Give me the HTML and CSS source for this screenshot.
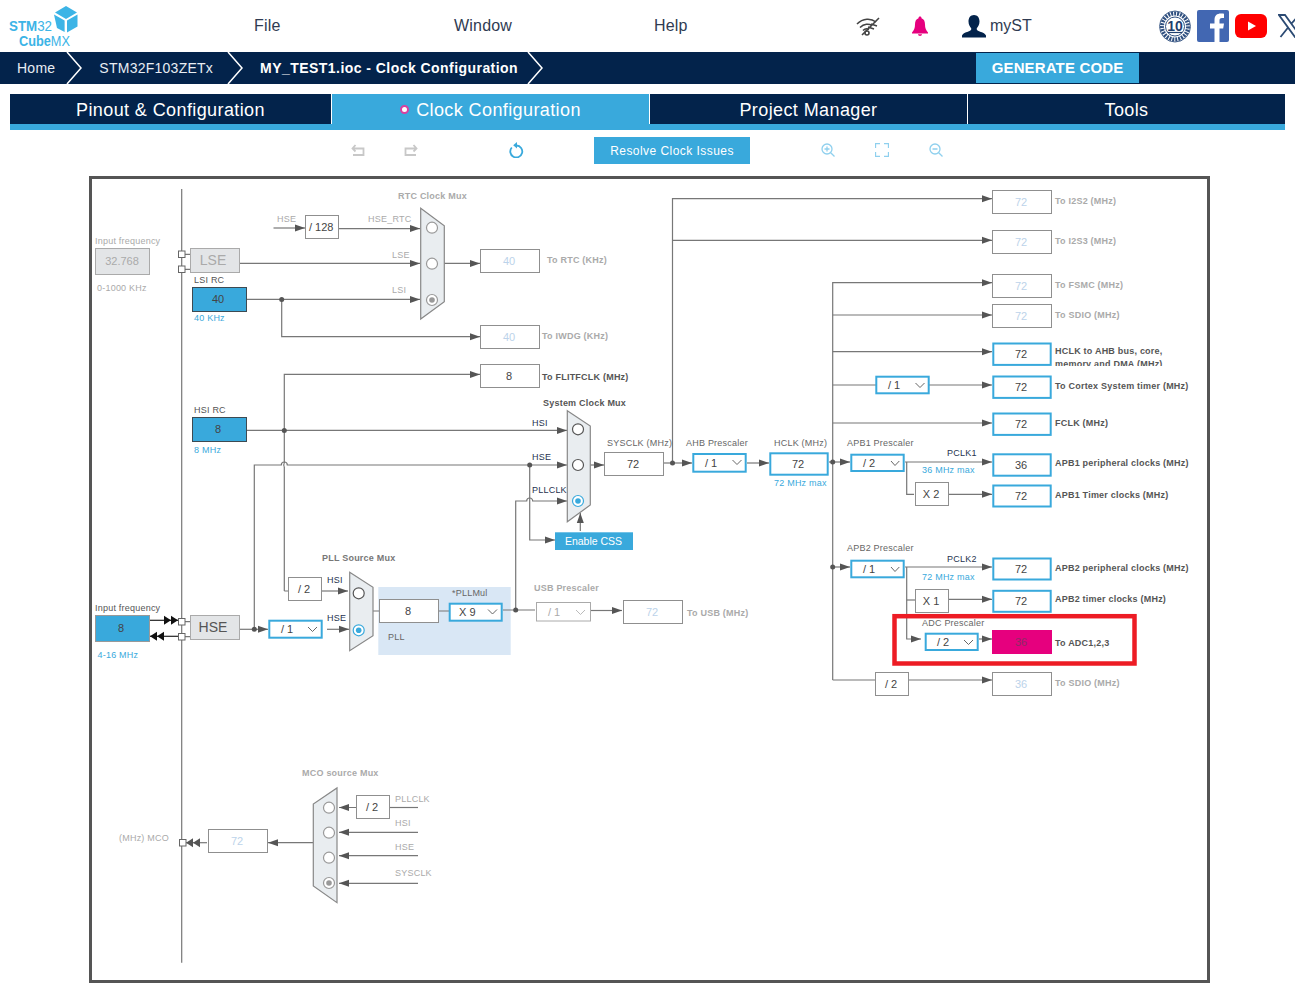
FILE: index.html
```html
<!DOCTYPE html>
<html lang="en">
<head>
<meta charset="utf-8">
<title>STM32CubeMX - Clock Configuration</title>
<link rel="stylesheet" href="styles.css">
</head>
<body>
<header class="top">
  <div class="logo">
    <svg width="80" height="50" viewBox="0 0 80 50">
      <polygon class="lg" points="66,6 77,12.5 66,19 55,12.5"/>
      <polygon class="lg" points="54,14.5 64.6,20.5 64.6,32 57,28"/>
      <polygon class="lg" points="67,20.5 77.5,14.5 77.5,26.5 67,32.5"/>
      <text class="lgt" transform="translate(9 31) scale(.89 1)"><tspan class="lgb">STM</tspan>32</text>
      <text class="lgt" transform="translate(19 45.500) scale(.85 1)"><tspan class="lgb">Cube</tspan>MX</text>
    </svg>
  </div>
  <nav class="menu">
    <span class="menu-item">File</span>
    <span class="menu-item">Window</span>
    <span class="menu-item">Help</span>
  </nav>
  <svg class="ic-wifi" width="24" height="20" viewBox="0 0 24 20">
    <path class="wf" d="M1 8C7 2 15 2 20 6M4 11.500C8 7.500 13 7.500 16 9.500M7 14.500C9 12.500 11.500 12.500 13 13.500"/>
    <path class="wf" d="M6 19L23 2M15 8L21 10M12 11L18 13"/>
    <circle class="wf" cx="11" cy="17" r="2"/>
  </svg>
  <svg class="ic-bell" width="16" height="20" viewBox="0 0 16 20">
    <path class="bell" d="M8 0.500C9 0.500 9.500 1 9.500 2.200C12.200 3 13 5.500 13 8.500C13 12 14 14 16 16.500V17.500H0V16.500C2 14 3 12 3 8.500C3 5.500 3.800 3 6.500 2.200C6.500 1 7 0.500 8 0.500ZM6 18.300H10C10 19.300 9 20 8 20S6 19.300 6 18.300Z"/>
  </svg>
  <svg class="ic-user" width="24" height="23" viewBox="0 0 24 23">
    <path class="usr" d="M12 0C15.500 0 17.500 2.800 17.500 6.500C17.500 9.500 16 12 14.800 13.200C14.500 14.500 15 15.300 16.500 16C19.500 17.300 23 18 24 20.500V22.500H0V20.500C1 18 4.500 17.300 7.500 16C9 15.300 9.500 14.500 9.200 13.200C8 12 6.500 9.500 6.500 6.500C6.500 2.800 8.500 0 12 0Z"/>
  </svg>
  <span class="myst">myST</span>
  <svg class="ic-badge" width="32" height="33" viewBox="0 0 32 33">
    <circle class="bd0" cx="16" cy="16.500" r="15.500"/>
    <circle class="bd1" cx="16" cy="16.500" r="13"/>
    <circle class="bd2" cx="16" cy="16.500" r="9.500"/>
    <text class="bdt" x="16" y="20.500" text-anchor="middle">10</text>
    <path class="bd3" d="M9 22.500H23"/>
  </svg>
  <svg class="ic-fb" width="32" height="32" viewBox="0 0 32 32">
    <rect class="fb" width="32" height="32" rx="2"/>
    <path class="wh" d="M17.500 32V18.500H13V13.500H17.500V10C17.500 5.500 20 3.500 24 3.500C25.500 3.500 27 3.700 27 3.700V8H25C23 8 22.500 9 22.500 10.500V13.500H27L26.200 18.500H22.500V32Z"/>
  </svg>
  <svg class="ic-yt" width="32" height="24" viewBox="0 0 32 24">
    <rect class="yt" width="32" height="24" rx="6"/>
    <polygon class="wh" points="13,7.500 21,12 13,16.500"/>
  </svg>
  <svg class="ic-x" width="24" height="24" viewBox="0 0 24 24">
    <path class="xl" d="M1 1H7L23 23H17ZM21 1L13.500 9.500M10.500 13L2.500 23"/>
  </svg>
</header>

<div class="crumbs">
  <span class="crumb">Home</span>
  <svg class="chev first" width="16" height="32" viewBox="0 0 16 32"><path class="chv" d="M1 0L15 16L1 32"/></svg>
  <span class="crumb">STM32F103ZETx</span>
  <svg class="chev second" width="16" height="32" viewBox="0 0 16 32"><path class="chv" d="M1 0L15 16L1 32"/></svg>
  <span class="crumb strong">MY_TEST1.ioc - Clock Configuration</span>
  <svg class="chev third" width="16" height="32" viewBox="0 0 16 32"><path class="chv" d="M1 0L15 16L1 32"/></svg>
  <button class="generate">GENERATE CODE</button>
</div>

<div class="tabs">
  <div class="tab">Pinout &amp; Configuration</div>
  <div class="tab active"><span class="dot"></span>Clock Configuration</div>
  <div class="tab">Project Manager</div>
  <div class="tab">Tools</div>
</div>

<div class="toolbar">
  <svg class="t-undo" width="14" height="14" viewBox="0 0 14 14"><path class="tg" d="M1.500 5.500H12.500V12H2M4.500 2L1.500 5.500L4.500 8.500"/></svg>
  <svg class="t-redo" width="14" height="14" viewBox="0 0 14 14"><path class="tg" d="M12.500 5.500H1.500V12H12M9.500 2L12.500 5.500L9.500 8.500"/></svg>
  <svg class="t-refresh" width="15" height="16" viewBox="0 0 15 16"><path class="tb" d="M2.800 5.500A6 6 0 1 0 7.500 3.500"/><polygon class="tbf" points="8,0 8,6.500 4.200,3.300"/></svg>
  <button class="resolve">Resolve Clock Issues</button>
  <svg class="t-zin" width="14" height="14" viewBox="0 0 14 14"><circle class="tl" cx="6" cy="6" r="5"/><path class="tl" d="M9.700 9.700L13.500 13.500M3.500 6H8.500M6 3.500V8.500"/></svg>
  <svg class="t-full" width="14" height="14" viewBox="0 0 14 14"><path class="tl" d="M.5 5V.5H5M9 .5H13.500V5M13.500 9V13.500H9M5 13.500H.5V9"/></svg>
  <svg class="t-zout" width="14" height="14" viewBox="0 0 14 14"><circle class="tl" cx="6" cy="6" r="5"/><path class="tl" d="M9.700 9.700L13.500 13.500M3.500 6H8.500"/></svg>
</div>

<main class="diagram">
<svg class="clock" width="1115" height="801" viewBox="92 179 1115 801">
  <defs>
    <marker id="a" markerUnits="userSpaceOnUse" markerWidth="10" markerHeight="8" refX="10" refY="4" orient="auto"><path class="head" d="M0 .5L10 4L0 7.500Z"/></marker>
    <marker id="k" markerUnits="userSpaceOnUse" markerWidth="14" markerHeight="10" refX="14" refY="5" orient="auto"><path class="headk" d="M0 .5L7 5L0 9.500ZM7 .5L14 5L7 9.500Z"/></marker>
    <marker id="g" markerUnits="userSpaceOnUse" markerWidth="14" markerHeight="10" refX="14" refY="5" orient="auto"><path class="head" d="M0 .5L7 5L0 9.500ZM7 .5L14 5L7 9.500Z"/></marker>
    <clipPath id="clipAhb"><rect x="1054" y="340" width="130" height="26"/></clipPath>
  </defs>

  <!-- bus -->
  <path class="w" d="M181.700 189V962.700"/>
  <rect class="pll" x="378.300" y="587" width="132.400" height="68"/>

  <!-- wires -->
  <path class="w" d="M273.500 228H305" marker-end="url(#a)"/>
  <path class="w" d="M338 228.600H420" marker-end="url(#a)"/>
  <path class="w" d="M240 263.400H420" marker-end="url(#a)"/>
  <path class="w" d="M247 299.400H420" marker-end="url(#a)"/>
  <path class="w" d="M444 263.400H480" marker-end="url(#a)"/>
  <path class="w" d="M281.700 299.400V336.700H480" marker-end="url(#a)"/>
  <path class="w" d="M284.300 591H288M284.300 591V467M284.300 463V374.400H480" marker-end="url(#a)"/>
  <path class="w" d="M284.300 467A2 3 0 0 1 284.300 463" />
  <path class="w" d="M247 430.400H567" marker-end="url(#a)"/>
  <path class="w" d="M254.300 629.300V465H281.300A3 3 0 0 1 287.300 465H567" marker-end="url(#a)"/>
  <path class="w" d="M529.700 465V540H555" marker-end="url(#a)"/>
  <path class="w" d="M515.700 610V501H526.700A3 3 0 0 1 532.700 501H567" marker-end="url(#a)"/>
  <path class="w" d="M580.300 531V513" marker-end="url(#a)"/>
  <path class="w" d="M590 465H604" marker-end="url(#a)"/>
  <path class="w" d="M664 463H692" marker-end="url(#a)"/>
  <path class="w" d="M672.500 463V198.700H992" marker-end="url(#a)"/>
  <path class="w" d="M672.500 240.300H992" marker-end="url(#a)"/>
  <path class="w" d="M747 463H769" marker-end="url(#a)"/>
  <path class="w" d="M829 462H850" marker-end="url(#a)"/>
  <path class="w" d="M832.700 567H850" marker-end="url(#a)"/>
  <path class="w" d="M832.700 680V282.700H992" marker-end="url(#a)"/>
  <path class="w" d="M832.700 315H992" marker-end="url(#a)"/>
  <path class="w" d="M832.700 351.700H992" marker-end="url(#a)"/>
  <path class="w" d="M832.700 385H992" marker-end="url(#a)"/>
  <path class="w" d="M832.700 423H992" marker-end="url(#a)"/>
  <path class="w" d="M905 462H992" marker-end="url(#a)"/>
  <path class="w" d="M906.700 462V494.300H914"/>
  <path class="w" d="M949 494.300H992" marker-end="url(#a)"/>
  <path class="w" d="M905 567H992" marker-end="url(#a)"/>
  <path class="w" d="M906.700 567V639H921" marker-end="url(#a)"/>
  <path class="w" d="M906.700 600H915"/>
  <path class="w" d="M949 599.300H992" marker-end="url(#a)"/>
  <path class="w" d="M979 639H992" marker-end="url(#a)"/>
  <path class="w" d="M832.700 680H875"/>
  <path class="w" d="M909 680H992" marker-end="url(#a)"/>
  <path class="w" d="M240 629.300H268" marker-end="url(#a)"/>
  <path class="w" d="M327 629.300H349" marker-end="url(#a)"/>
  <path class="w" d="M322 591H348" marker-end="url(#a)"/>
  <path class="w" d="M373 611H380M438 611H449M503 610H535"/>
  <path class="w" d="M591 610.500H622" marker-end="url(#a)"/>
  <path class="w" d="M390 807.500H339" marker-end="url(#a)"/>
  <path class="w" d="M418 807.500H390"/>
  <path class="w" d="M418 832.300H339" marker-end="url(#a)"/>
  <path class="w" d="M418 855.700H339" marker-end="url(#a)"/>
  <path class="w" d="M418 883.300H339" marker-end="url(#a)"/>
  <path class="w" d="M313 842.700H268" marker-end="url(#a)"/>
  <path class="w" d="M207 842.700H186" marker-end="url(#g)"/>
  <path class="b" d="M150 620.300H178" marker-end="url(#k)"/>
  <path class="b" d="M178 636.300H150" marker-end="url(#k)"/>
  <path class="w" d="M181.700 254.300H190M181.700 269.300H190M181.700 621.700H190M181.700 636.700H190"/>

  <!-- dots -->
  <circle class="node" cx="281.700" cy="299.400" r="2.500"/>
  <circle class="node" cx="284.300" cy="430.400" r="2.500"/>
  <circle class="node" cx="529.700" cy="465" r="2.500"/>
  <circle class="node" cx="254.300" cy="629.300" r="2.500"/>
  <circle class="node" cx="515.700" cy="610" r="2.500"/>
  <circle class="node" cx="672.500" cy="463" r="2.500"/>
  <circle class="node" cx="832.700" cy="462" r="2.500"/>
  <circle class="node" cx="832.700" cy="567" r="2.500"/>

  <!-- pads -->
  <rect class="pad" x="178.500" y="251" width="6.500" height="6.500"/>
  <rect class="pad" x="178.500" y="266" width="6.500" height="6.500"/>
  <rect class="pad" x="178.500" y="618.500" width="6.500" height="6.500"/>
  <rect class="pad" x="178.500" y="633.500" width="6.500" height="6.500"/>
  <rect class="pad" x="179.500" y="839.500" width="6.500" height="6.500"/>

  <!-- muxes -->
  <polygon class="mux" points="420.700,208.300 444.300,225.700 444.300,301.700 420.700,319"/>
  <circle class="off" cx="432" cy="227.700" r="5.500"/>
  <circle class="off" cx="432" cy="263.700" r="5.500"/>
  <circle class="off" cx="432" cy="300" r="5.500"/><circle class="offdot" cx="432" cy="300" r="2.800"/>

  <polygon class="mux" points="567.300,410.700 590.300,426 590.300,505 567.300,521.700"/>
  <circle class="on" cx="578" cy="429.300" r="5.500"/>
  <circle class="on" cx="578" cy="465" r="5.500"/>
  <circle class="sel" cx="578" cy="501" r="5.500"/><circle class="seldot" cx="578" cy="501" r="2.800"/>

  <polygon class="mux" points="349.700,572.300 373,587.300 373,635.700 349.700,650.700"/>
  <circle class="on" cx="358.700" cy="593.300" r="5.500"/>
  <circle class="sel" cx="358.700" cy="630.300" r="5.500"/><circle class="seldot" cx="358.700" cy="630.300" r="2.800"/>

  <polygon class="mux" points="337,788 337,902.700 313.300,886 313.300,804"/>
  <circle class="off" cx="329" cy="807.700" r="5.500"/>
  <circle class="off" cx="329" cy="832.700" r="5.500"/>
  <circle class="off" cx="329" cy="857.700" r="5.500"/>
  <circle class="off" cx="329" cy="883" r="5.500"/><circle class="offdot" cx="329" cy="883" r="2.800"/>

  <!-- source boxes -->
  <rect class="grey" x="95.500" y="248.500" width="54" height="26"/>
  <text class="n mid off-t" x="122" y="265">32.768</text>
  <rect class="grey" x="190.500" y="248.500" width="49" height="24"/>
  <text class="src mid off-t" x="213" y="265">LSE</text>
  <rect class="act" x="192.500" y="287.500" width="54" height="24"/>
  <text class="n mid" x="218" y="303">40</text>
  <rect class="act" x="192.500" y="417.500" width="54" height="24"/>
  <text class="n mid" x="218" y="433">8</text>
  <rect class="act2" x="95.500" y="615.500" width="54" height="26"/>
  <text class="n mid" x="121" y="632">8</text>
  <rect class="grey dark" x="190.500" y="615.500" width="49" height="24"/>
  <text class="src mid" x="213" y="632">HSE</text>

  <!-- plain boxes -->
  <rect class="box" x="305.500" y="215.500" width="33" height="23"/>
  <text class="n" x="309" y="231">/ 128</text>
  <rect class="box" x="288.500" y="577.500" width="33" height="23"/>
  <text class="n mid" x="304" y="593">/ 2</text>
  <rect class="box" x="379.500" y="599.500" width="59" height="23"/>
  <text class="n mid" x="408" y="615">8</text>
  <rect class="box" x="915.500" y="482.500" width="33" height="23"/>
  <text class="n mid" x="931" y="498">X 2</text>
  <rect class="box" x="915.500" y="589.500" width="33" height="23"/>
  <text class="n mid" x="931" y="605">X 1</text>
  <rect class="box" x="875.500" y="672.500" width="33" height="23"/>
  <text class="n mid" x="891" y="688">/ 2</text>
  <rect class="box" x="356.500" y="795.500" width="33" height="23"/>
  <text class="n mid" x="372" y="811">/ 2</text>

  <!-- selects -->
  <rect class="selbox" x="269.300" y="620.700" width="52.400" height="17"/>
  <text class="n" x="281" y="633">/ 1</text><path class="cv" d="M308 627L312.500 631.500L317 627"/>
  <rect class="selbox" x="449.700" y="603.700" width="52" height="17"/>
  <text class="n" x="459" y="616">X 9</text><path class="cv" d="M488 609.500L492.500 614L497 609.500"/>
  <rect class="selbox" x="693.300" y="454" width="52.400" height="17.700"/>
  <text class="n" x="705" y="467">/ 1</text><path class="cv" d="M732.500 460L737 464.500L741.500 460"/>
  <rect class="selbox" x="876.300" y="376.700" width="52.400" height="16.600"/>
  <text class="n" x="888" y="389">/ 1</text><path class="cv" d="M915.500 383L920 387.500L924.500 383"/>
  <rect class="selbox" x="851.300" y="454.700" width="52.400" height="16.300"/>
  <text class="n" x="863" y="467">/ 2</text><path class="cv" d="M891 461L895 465.500L899.300 461"/>
  <rect class="selbox" x="851.300" y="560.700" width="52.400" height="16.600"/>
  <text class="n" x="863" y="573">/ 1</text><path class="cv" d="M891 567L895 571.500L899.300 567"/>
  <rect class="selbox" x="925.700" y="633.700" width="52" height="16.300"/>
  <text class="n" x="937" y="646">/ 2</text><path class="cv" d="M964 640L968.500 644.500L973 640"/>
  <rect class="selgrey" x="536.500" y="602.500" width="54" height="18.500"/>
  <text class="n off-t" x="548" y="616">/ 1</text><path class="cvg" d="M576 610L580.500 614.500L585 610"/>

  <!-- outputs -->
  <rect class="box" x="480.500" y="249.500" width="59" height="23"/><text class="n mid pale" x="509" y="265">40</text>
  <rect class="box" x="480.500" y="325.500" width="59" height="23"/><text class="n mid pale" x="509" y="341">40</text>
  <rect class="box" x="480.500" y="364.500" width="59" height="23"/><text class="n mid" x="509" y="380">8</text>
  <rect class="box" x="604.500" y="452.500" width="59" height="23"/><text class="n mid" x="633" y="468">72</text>
  <rect class="bb" x="770.300" y="453.300" width="57.400" height="21.400"/><text class="n mid" x="798" y="468">72</text>
  <rect class="box" x="623.500" y="600.500" width="59" height="23"/><text class="n mid pale" x="652" y="616">72</text>
  <rect class="box" x="208.500" y="829.500" width="59" height="23"/><text class="n mid pale" x="237" y="845">72</text>

  <rect class="box" x="992.500" y="190.500" width="59" height="23"/><text class="n mid pale" x="1021" y="206">72</text>
  <rect class="box" x="992.500" y="230.500" width="59" height="23"/><text class="n mid pale" x="1021" y="246">72</text>
  <rect class="box" x="992.500" y="274.500" width="59" height="23"/><text class="n mid pale" x="1021" y="290">72</text>
  <rect class="box" x="992.500" y="304.500" width="59" height="23"/><text class="n mid pale" x="1021" y="320">72</text>
  <rect class="bb" x="993.300" y="343.500" width="57.400" height="21.400"/><text class="n mid" x="1021" y="358">72</text>
  <rect class="bb" x="993.300" y="376.500" width="57.400" height="21.400"/><text class="n mid" x="1021" y="391">72</text>
  <rect class="bb" x="993.300" y="413.500" width="57.400" height="21.400"/><text class="n mid" x="1021" y="428">72</text>
  <rect class="bb" x="993.300" y="454.300" width="57.400" height="21.400"/><text class="n mid" x="1021" y="469">36</text>
  <rect class="bb" x="993.300" y="485.500" width="57.400" height="21"/><text class="n mid" x="1021" y="500">72</text>
  <rect class="bb" x="993.300" y="558.500" width="57.400" height="21"/><text class="n mid" x="1021" y="573">72</text>
  <rect class="bb" x="993.300" y="590.800" width="57.400" height="21"/><text class="n mid" x="1021" y="605">72</text>
  <rect class="pink" x="992" y="630" width="60" height="24"/><text class="n mid pinkt" x="1021" y="646">36</text>
  <rect class="box" x="992.500" y="672.500" width="59" height="23"/><text class="n mid pale" x="1021" y="688">36</text>

  <rect class="enable" x="555" y="532.300" width="78" height="17.700"/>
  <text class="en mid" x="593.500" y="545">Enable CSS</text>

  <!-- labels -->
  <text class="bd" x="398" y="199">RTC Clock Mux</text>
  <text class="lb" x="277" y="222">HSE</text>
  <text class="lb" x="368" y="222">HSE_RTC</text>
  <text class="lb" x="392" y="258">LSE</text>
  <text class="lb" x="392" y="293">LSI</text>
  <text class="lb" x="95" y="244">Input frequency</text>
  <text class="lb" x="97" y="291">0-1000 KHz</text>
  <text class="dk" x="194" y="283">LSI RC</text>
  <text class="bl" x="194" y="321">40 KHz</text>
  <text class="dk" x="194" y="413">HSI RC</text>
  <text class="bl" x="194" y="453">8 MHz</text>
  <text class="dk" x="95" y="611">Input frequency</text>
  <text class="bl" x="97.500" y="658">4-16 MHz</text>
  <text class="bd" x="547" y="263">To RTC (KHz)</text>
  <text class="bd" x="542" y="339">To IWDG (KHz)</text>
  <text class="bdk" x="542" y="380">To FLITFCLK (MHz)</text>
  <text class="bdk" x="543" y="406">System Clock Mux</text>
  <text class="nv" x="532" y="426">HSI</text>
  <text class="nv" x="532" y="460">HSE</text>
  <text class="nv" x="532" y="493">PLLCLK</text>
  <text class="dg" x="607" y="446">SYSCLK (MHz)</text>
  <text class="dg" x="686" y="446">AHB Prescaler</text>
  <text class="dg" x="774" y="446">HCLK (MHz)</text>
  <text class="bl" x="774" y="486">72 MHz max</text>
  <text class="bdm" x="322" y="561">PLL Source Mux</text>
  <text class="nv" x="327" y="583">HSI</text>
  <text class="nv" x="327" y="621">HSE</text>
  <text class="dg" x="452" y="596">*PLLMul</text>
  <text class="dg" x="388" y="640">PLL</text>
  <text class="bd" x="534" y="591">USB Prescaler</text>
  <text class="bd" x="687" y="616">To USB (MHz)</text>

  <text class="bd" x="1055" y="204">To I2S2 (MHz)</text>
  <text class="bd" x="1055" y="244">To I2S3 (MHz)</text>
  <text class="bd" x="1055" y="288">To FSMC (MHz)</text>
  <text class="bd" x="1055" y="318">To SDIO (MHz)</text>
  <g clip-path="url(#clipAhb)">
    <text class="bdk" x="1055" y="354">HCLK to AHB bus, core,</text>
    <text class="bdk" x="1055" y="367">memory and DMA (MHz)</text>
  </g>
  <text class="bdk" x="1055" y="389">To Cortex System timer (MHz)</text>
  <text class="bdk" x="1055" y="426">FCLK (MHz)</text>
  <text class="dg" x="847" y="446">APB1 Prescaler</text>
  <text class="nv" x="947" y="456">PCLK1</text>
  <text class="bl" x="922" y="473">36 MHz max</text>
  <text class="bdk" x="1055" y="466">APB1 peripheral clocks (MHz)</text>
  <text class="bdk" x="1055" y="498">APB1 Timer clocks (MHz)</text>
  <text class="dg" x="847" y="551">APB2 Prescaler</text>
  <text class="nv" x="947" y="562">PCLK2</text>
  <text class="bl" x="922" y="580">72 MHz max</text>
  <text class="bdk" x="1055" y="571">APB2 peripheral clocks (MHz)</text>
  <text class="bdk" x="1055" y="602">APB2 timer clocks (MHz)</text>
  <text class="dg" x="922" y="626">ADC Prescaler</text>
  <text class="bdk" x="1055" y="646">To ADC1,2,3</text>
  <text class="bd" x="1055" y="686">To SDIO (MHz)</text>

  <text class="bd" x="302" y="776">MCO source Mux</text>
  <text class="lb" x="119" y="841">(MHz) MCO</text>
  <text class="lb" x="395" y="802">PLLCLK</text>
  <text class="lb" x="395" y="826">HSI</text>
  <text class="lb" x="395" y="850">HSE</text>
  <text class="lb" x="395" y="876">SYSCLK</text>

  <rect class="redbox" x="894.500" y="616.200" width="240" height="47.300"/>
</svg>
</main>
</body>
</html>
```

FILE: styles.css
```css
html, body {
  margin: 0;
  padding: 0;
  background: #fff;
  overflow-x: hidden;
}
body {
  width: 1295px;
  font-family: "Liberation Sans", Arial, sans-serif;
}
button {
  border: 0;
  padding: 0;
  font-family: inherit;
}

/* top bar */
.top {
  display: flex;
  align-items: center;
  height: 52px;
  overflow: hidden;
}
.top svg { flex: none; display: block; }
.logo { flex: none; width: 254px; align-self: flex-start; }
.lg { fill: #3cb4e6; }
.lgt { font: 15px "Liberation Sans", sans-serif; fill: #3cb4e6; }
.lgb { font-weight: bold; }
.menu { display: flex; flex: none; width: 600px; }
.menu-item {
  width: 200px;
  font-size: 16px;
  letter-spacing: .2px;
  color: #2f3b52;
}
.ic-wifi { margin-left: 2px; }
.ic-bell { margin-left: 32px; }
.ic-user { margin-left: 34px; }
.myst { margin-left: 4px; font-size: 16px; color: #2f3b52; flex: none; }
.ic-badge { margin-left: 127px; }
.ic-fb { margin-left: 6px; }
.ic-yt { margin-left: 6px; }
.ic-x { margin-left: 11px; }
.wf { fill: none; stroke: #444; stroke-width: 1.6; }
.bell { fill: #e6007e; }
.usr { fill: #03234b; }
.bd0 { fill: #fff; stroke: #4a668f; stroke-width: 1; }
.bd1 { fill: #fff; stroke: #2f4f7f; stroke-width: 4; stroke-dasharray: 2 1; }
.bd2 { fill: #fff; stroke: #2f4f7f; stroke-width: 1; }
.bdt { font: bold 14px "Liberation Sans", sans-serif; fill: #1f3f6e; }
.bd3 { fill: none; stroke: #1f3f6e; stroke-width: 1.2; }
.fb { fill: #4267b2; }
.wh { fill: #fff; }
.yt { fill: #ff0000; }
.xl { fill: none; stroke: #2b4a73; stroke-width: 1.8; }

/* breadcrumb */
.crumbs {
  display: flex;
  align-items: center;
  height: 32px;
  background: #03234b;
}
.crumb {
  flex: none;
  font-size: 14px;
  letter-spacing: .25px;
  color: #e8edf3;
}
.crumbs > .crumb:first-child { margin-left: 17px; }
.crumb.strong {
  font-weight: bold;
  color: #fff;
  letter-spacing: .45px;
}
.chev { flex: none; display: block; }
.chev.first { margin: 0 17px 0 11px; }
.chev.second { margin: 0 17px 0 14px; }
.chev.third { margin-left: 9px; }
.chv { fill: none; stroke: #fff; stroke-width: 1.5; }
.generate {
  margin-left: auto;
  margin-right: 156px;
  width: 163px;
  height: 30px;
  padding-bottom: 2px;
  background: #39a9dc;
  color: #fff;
  font-size: 15px;
  font-weight: bold;
  letter-spacing: .15px;
}

/* tabs */
.tabs {
  display: grid;
  grid-template-columns: 321px 318px 318px 318px;
  margin: 10px 10px 0;
  border-bottom: 6px solid #39a9dc;
}
.tab {
  height: 30px;
  line-height: 32px;
  text-align: center;
  font-size: 18px;
  letter-spacing: .4px;
  color: #fff;
  background: #03234b;
  border-left: 1px solid #fff;
}
.tab:first-child { border-left: 0; }
.tab.active { background: #39a9dc; }
.dot {
  display: inline-block;
  width: 5px;
  height: 5px;
  margin-right: 7px;
  vertical-align: 2px;
  background: #fff;
  border: 2.5px solid #d9409f;
  border-radius: 50%;
}

/* toolbar */
.toolbar {
  display: flex;
  align-items: center;
  height: 27px;
  margin-top: 7px;
  padding-left: 351px;
}
.toolbar svg { flex: none; display: block; margin-bottom: 2px; }
.tg { fill: none; stroke: #c8c8c8; stroke-width: 1.8; }
.tb { fill: none; stroke: #39a9dc; stroke-width: 1.8; }
.tbf { fill: #39a9dc; }
.tl { fill: none; stroke: #8fd0ee; stroke-width: 1.3; }
.toolbar .t-redo { margin-left: 39px; }
.toolbar .t-refresh { margin-left: 91px; }
.resolve {
  flex: none;
  margin-left: 70px;
  width: 156px;
  height: 27px;
  background: #39a9dc;
  color: #fff;
  font-size: 12px;
  letter-spacing: .45px;
}
.toolbar .t-zin { margin-left: 71px; }
.toolbar .t-full { margin-left: 40px; }
.toolbar .t-zout { margin-left: 40px; }

/* diagram */
.diagram {
  box-sizing: border-box;
  width: 1121px;
  height: 807px;
  margin: 12px 0 0 89px;
  border: 3px solid #555;
}
.clock { display: block; overflow: visible; }
.clock text {
  font-family: "Liberation Sans", Arial, sans-serif;
  font-size: 9px;
  letter-spacing: .22px;
}
.w { fill: none; stroke: #777; stroke-width: 1.2; }
.b { fill: none; stroke: #222; stroke-width: 1.2; }
.head { fill: #555; }
.headk { fill: #111; }
.node { fill: #555; }
.pad { fill: #fff; stroke: #666; stroke-width: 1; }
.pll { fill: #d9e7f5; }
.mux { fill: #e9edf0; stroke: #888; stroke-width: 1.2; }
.off { fill: #fff; stroke: #999; stroke-width: 1.2; }
.offdot { fill: #999; }
.on { fill: #fff; stroke: #555; stroke-width: 1.2; }
.sel { fill: #fff; stroke: #39a9dc; stroke-width: 1.2; }
.seldot { fill: #39a9dc; }
.grey { fill: #e3e5e7; stroke: #aaa; stroke-width: 1; }
.act { fill: #39a9dc; stroke: #3d4a52; stroke-width: 1; }
.act2 { fill: #39a9dc; stroke: #999; stroke-width: 1; }
.box { fill: #fff; stroke: #8f8f8f; stroke-width: 1; }
.selbox, .bb { fill: #fff; stroke: #39a9dc; stroke-width: 2; }
.selgrey { fill: #fff; stroke: #aaa; stroke-width: 1; }
.cv { fill: none; stroke: #666; stroke-width: 1; }
.cvg { fill: none; stroke: #bbb; stroke-width: 1; }
.pink { fill: #e6007e; }
.enable { fill: #39a9dc; }
.redbox { fill: none; stroke: #ed1c24; stroke-width: 4.5; }

.clock .n { font-size: 11px; letter-spacing: 0; fill: #444; }
.clock .src { font-size: 14px; letter-spacing: 0; fill: #555; }
.clock .en { font-size: 10.5px; letter-spacing: 0; fill: #fff; }
.mid { text-anchor: middle; }
.clock .off-t { fill: #aaa; }
.clock .pale { fill: #bcd3ea; }
.clock .pinkt { fill: #8c2a66; }
.lb { fill: #aaa; }
.dk { fill: #555; }
.dg { fill: #666; }
.bl { fill: #39a9dc; }
.nv { fill: #1f3350; }
.bd { fill: #aaa; font-weight: bold; }
.bdk { fill: #555; font-weight: bold; }
.bdm { fill: #777; font-weight: bold; }
```
